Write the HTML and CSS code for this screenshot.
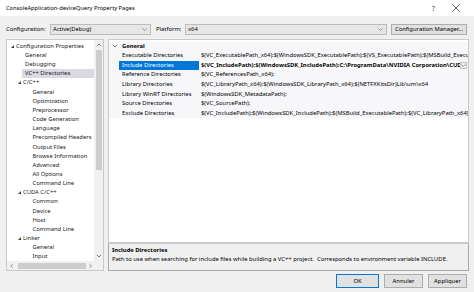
FILE: index.html
```html
<!DOCTYPE html>
<html lang="en">
  <head>
    <meta charset="UTF-8">
    <title>ConsoleApplication-deviceQuery Property Pages</title>
    <link rel="stylesheet" href="styles.css">
  </head>
  <body>
    <div class="dialog">
      <div class="titlebar">
        <span class="title">ConsoleApplication-deviceQuery Property Pages</span>
        <span class="tb-btn">?</span>
        <span class="tb-btn close">
          <svg width="8" height="8" viewBox="0 0 8 8"><path d="M0.5 0.5L7.5 7.5M7.5 0.5L0.5 7.5" stroke="#333" stroke-width="0.8" fill="none"/></svg>
        </span>
      </div>

      <div class="config-row">
        <span class="lbl">Configuration:</span>
        <div class="combo combo-config">
          <span>Active(Debug)</span>
          <svg class="chev" width="5" height="3" viewBox="0 0 5 3"><path d="M0.4 0.4L2.5 2.5L4.6 0.4" stroke="#777" stroke-width="0.7" fill="none"/></svg>
        </div>
        <span class="lbl lbl-platform">Platform:</span>
        <div class="combo combo-platform">
          <span>x64</span>
          <svg class="chev" width="5" height="3" viewBox="0 0 5 3"><path d="M0.4 0.4L2.5 2.5L4.6 0.4" stroke="#777" stroke-width="0.7" fill="none"/></svg>
        </div>
        <button class="btn btn-manager">Configuration Manager...</button>
      </div>

      <div class="panes">
        <div class="tree">
          <div class="tree-view">
            <ul class="tree-items">
              <li class="lvl0"><span class="tri"></span>Configuration Properties</li>
              <li class="lvl1">General</li>
              <li class="lvl1">Debugging</li>
              <li class="lvl1 selected">VC++ Directories</li>
              <li class="lvl1 open"><span class="tri"></span>C/C++</li>
              <li class="lvl2">General</li>
              <li class="lvl2">Optimization</li>
              <li class="lvl2">Preprocessor</li>
              <li class="lvl2">Code Generation</li>
              <li class="lvl2">Language</li>
              <li class="lvl2">Precompiled Headers</li>
              <li class="lvl2">Output Files</li>
              <li class="lvl2">Browse Information</li>
              <li class="lvl2">Advanced</li>
              <li class="lvl2">All Options</li>
              <li class="lvl2">Command Line</li>
              <li class="lvl1 open"><span class="tri"></span>CUDA C/C++</li>
              <li class="lvl2">Common</li>
              <li class="lvl2">Device</li>
              <li class="lvl2">Host</li>
              <li class="lvl2">Command Line</li>
              <li class="lvl1 open"><span class="tri"></span>Linker</li>
              <li class="lvl2">General</li>
              <li class="lvl2">Input</li>
            </ul>
            <div class="vscroll">
              <svg width="6" height="4" viewBox="0 0 6 4"><path d="M0.8 3.2L3 1L5.2 3.2" stroke="#606060" stroke-width="0.8" fill="none"/></svg>
              <div class="vtrack"><div class="vthumb"></div></div>
              <svg width="6" height="4" viewBox="0 0 6 4"><path d="M0.8 0.8L3 3L5.2 0.8" stroke="#606060" stroke-width="0.8" fill="none"/></svg>
            </div>
          </div>
          <div class="hscroll">
            <svg width="4" height="6" viewBox="0 0 4 6"><path d="M3.2 0.8L1 3L3.2 5.2" stroke="#606060" stroke-width="0.8" fill="none"/></svg>
            <div class="htrack"><div class="hthumb"></div></div>
            <svg width="4" height="6" viewBox="0 0 4 6"><path d="M0.8 0.8L3 3L0.8 5.2" stroke="#606060" stroke-width="0.8" fill="none"/></svg>
            <div class="corner"></div>
          </div>
        </div>

        <div class="right">
          <div class="grid">
            <div class="row head">
              <span class="gutter">
                <svg width="6" height="4" viewBox="0 0 6 4"><path d="M0.8 0.8L3 3L5.2 0.8" stroke="#555" stroke-width="0.8" fill="none"/></svg>
              </span>
              <span class="name">General</span>
            </div>
            <div class="row">
              <span class="gutter"></span>
              <span class="name">Executable Directories</span>
              <span class="value">$(VC_ExecutablePath_x64);$(WindowsSDK_ExecutablePath);$(VS_ExecutablePath);$(MSBuild_ExecutablePath);$(FxCopDir);$(PATH);</span>
            </div>
            <div class="row active">
              <span class="gutter"></span>
              <span class="name">Include Directories</span>
              <span class="value">$(VC_IncludePath);$(WindowsSDK_IncludePath);C:\ProgramData\NVIDIA Corporation\CUDA Samples</span>
              <span class="drop">
                <svg width="5" height="3" viewBox="0 0 5 3"><path d="M0.4 0.4L2.5 2.5L4.6 0.4" stroke="#666" stroke-width="0.7" fill="none"/></svg>
              </span>
            </div>
            <div class="row">
              <span class="gutter"></span>
              <span class="name">Reference Directories</span>
              <span class="value">$(VC_ReferencesPath_x64);</span>
            </div>
            <div class="row">
              <span class="gutter"></span>
              <span class="name">Library Directories</span>
              <span class="value">$(VC_LibraryPath_x64);$(WindowsSDK_LibraryPath_x64);$(NETFXKitsDir)Lib\um\x64</span>
            </div>
            <div class="row">
              <span class="gutter"></span>
              <span class="name">Library WinRT Directories</span>
              <span class="value">$(WindowsSDK_MetadataPath);</span>
            </div>
            <div class="row">
              <span class="gutter"></span>
              <span class="name">Source Directories</span>
              <span class="value">$(VC_SourcePath);</span>
            </div>
            <div class="row">
              <span class="gutter"></span>
              <span class="name">Exclude Directories</span>
              <span class="value">$(VC_IncludePath);$(WindowsSDK_IncludePath);$(MSBuild_ExecutablePath);$(VC_LibraryPath_x64);</span>
            </div>
          </div>
          <div class="desc">
            <div class="desc-title">Include Directories</div>
            <div class="desc-text">Path to use when searching for include files while building a VC++ project.&nbsp; Corresponds to environment variable INCLUDE.</div>
          </div>
        </div>
      </div>

      <div class="footer">
        <button class="btn btn-ok">OK</button>
        <button class="btn">Annuler</button>
        <button class="btn">Appliquer</button>
      </div>
    </div>
  </body>
</html>
```

FILE: styles.css
```css
body {
  margin: 0;
  padding: 0;
  font-family: 'Noto Sans', 'Liberation Sans', sans-serif;
  font-size: 5.85px;
  color: #000;
  background: #f0f0f0;
}

.dialog {
  width: 474px;
  height: 292px;
  background: #f0f0f0;
  overflow: hidden;
}

/* title bar */

.titlebar {
  height: 16px;
  display: flex;
  align-items: center;
  background: #fff;
  padding-left: 6px;
  padding-right: 8px;
}

.title {
  flex: 1;
  font-size: 5.7px;
}

.tb-btn {
  width: 25px;
  text-align: center;
  font-size: 6.5px;
  color: #333;
  display: flex;
  justify-content: center;
}

.close {
  width: 20px;
}

/* configuration row */

.config-row {
  display: flex;
  align-items: center;
  height: 12px;
  margin-top: 7px;
  padding-left: 6px;
  white-space: nowrap;
}

.lbl {
  width: 44px;
}

.lbl-platform {
  width: 29px;
  margin-left: 5px;
}

.combo {
  height: 11px;
  display: flex;
  align-items: center;
  justify-content: space-between;
  background: #e6e6e6;
  border: 1px solid #bcbcbc;
  padding: 0 3px 0 2px;
  box-sizing: border-box;
}

.combo-config {
  width: 101px;
}

.combo-platform {
  width: 202px;
}

.btn {
  font-family: inherit;
  font-size: 5.85px;
  color: #000;
  background: #e1e1e1;
  border: 1px solid #adadad;
  padding: 0;
  height: 14px;
  box-sizing: border-box;
  white-space: nowrap;
}

.btn-manager {
  width: 76px;
  height: 11px;
  margin-left: 4px;
}

/* panes */

.panes {
  display: flex;
  height: 232px;
  margin-top: 4px;
  padding-left: 6px;
  gap: 4px;
}

.tree {
  width: 98px;
  background: #fff;
  border: 1px solid #c9c9c9;
  box-sizing: border-box;
  display: flex;
  flex-direction: column;
}

.tree-view {
  flex: 1;
  display: flex;
  overflow: hidden;
}

.tree-items {
  flex: 1;
  list-style: none;
  margin: 0;
  padding: 1.8px 0 0 0;
  overflow: hidden;
  white-space: nowrap;
}

.tree-items li {
  height: 9.16px;
  line-height: 9.16px;
  color: #1a1a1a;
}

.lvl0 {
  padding-left: 4px;
}

.lvl1 {
  padding-left: 18px;
}

.lvl1.open {
  padding-left: 11px;
}

.lvl2 {
  padding-left: 25.5px;
}

.selected {
  background: #d9d9e5;
  margin-left: 15px;
  padding-left: 3px !important;
}

.tri {
  display: inline-block;
  width: 0;
  height: 0;
  border-left: 3px solid transparent;
  border-bottom: 3px solid #3c3c3c;
  margin-right: 2px;
}

.vscroll {
  width: 9px;
  background: #f0f0f0;
  display: flex;
  flex-direction: column;
  align-items: center;
  padding: 3px 0;
  gap: 2px;
  box-sizing: border-box;
}

.vtrack {
  flex: 1;
  width: 100%;
  display: flex;
  justify-content: center;
}

.vthumb {
  width: 6px;
  height: 120px;
  margin-top: 1px;
  background: #cdcdcd;
}

.hscroll {
  height: 9px;
  display: flex;
  align-items: center;
  background: #f0f0f0;
  padding-left: 3px;
  gap: 3px;
}

.htrack {
  flex: 1;
  height: 100%;
  display: flex;
  align-items: center;
}

.hthumb {
  width: 68px;
  height: 6px;
  margin-left: 2px;
  background: #cdcdcd;
}

.corner {
  width: 9px;
  height: 100%;
  background: #f0f0f0;
}

/* property grid */

.right {
  width: 361px;
  display: flex;
  flex-direction: column;
}

.grid {
  flex: 1;
  background: #fff;
  border: 1px solid #c9c9c9;
  padding-top: 1.6px;
  overflow: hidden;
}

.row {
  height: 9.6px;
  line-height: 9.6px;
  display: flex;
  white-space: nowrap;
  background: #f7f7f9;
}

.gutter {
  width: 10px;
  flex: none;
  display: flex;
  align-items: center;
  justify-content: center;
  padding-left: 2px;
  box-sizing: border-box;
}

.name {
  width: 80px;
  flex: none;
  padding-left: 3px;
  box-sizing: border-box;
  overflow: hidden;
}

.head .name {
  font-weight: bold;
  width: auto;
}

.value {
  flex: 1;
  padding-left: 2px;
  overflow: hidden;
  min-width: 0;
}

.active .name {
  background: #0078d7;
  color: #fff;
}

.active .value {
  font-weight: bold;
  background: #fff;
}

.drop {
  width: 7px;
  flex: none;
  display: flex;
  align-items: center;
  justify-content: center;
  border: 1px solid #c4c4c4;
  background: #f0f0f0;
  margin: 1px 1px 1px 0;
  box-sizing: border-box;
}

.desc {
  height: 28px;
  border: 1px solid #a9a9a9;
  border-top-color: #c9c9c9;
  background: #f0f0f0;
  padding: 2px 3px;
  box-sizing: border-box;
}

.desc-title {
  font-weight: bold;
  line-height: 9px;
}

.desc-text {
  line-height: 9px;
  white-space: nowrap;
}

/* footer buttons */

.footer {
  display: flex;
  justify-content: flex-end;
  gap: 5px;
  margin-top: 3px;
  padding-right: 7px;
}

.footer .btn {
  width: 39px;
}

.footer .btn-ok {
  width: 43px;
  border: 1px solid #0078d7;
}
```
